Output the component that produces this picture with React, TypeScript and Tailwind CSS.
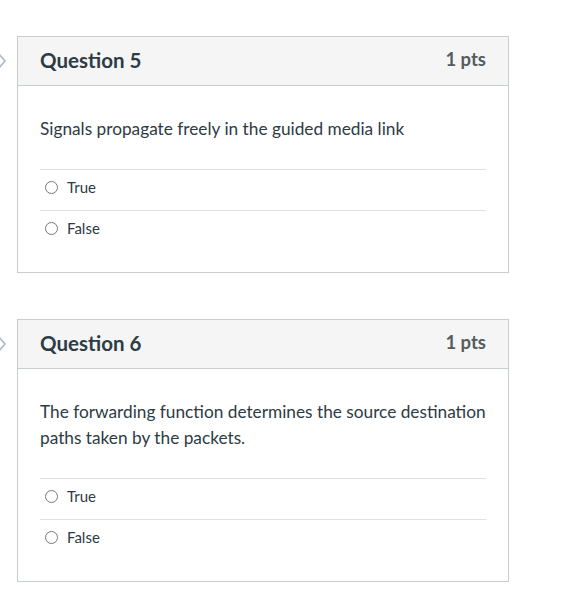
import React from 'react';

type Question = {
  id: number;
  text: string;
  points: string;
  answers: string[];
};

const questions: Question[] = [
  {
    id: 5,
    text: 'Signals propagate freely in the guided media link',
    points: '1 pts',
    answers: ['True', 'False'],
  },
  {
    id: 6,
    text: 'The forwarding function determines the source destination paths taken by the packets.',
    points: '1 pts',
    answers: ['True', 'False'],
  },
];

function Chevron() {
  return (
    <svg width="10" height="18" viewBox="0 0 10 18" className="shrink-0 -ml-[3px] mt-[16px]">
      <path d="M1 1 L8 9 L1 17" fill="none" stroke="#a9b9c9" strokeWidth="1.6" />
    </svg>
  );
}

function QuestionCard({ q }: { q: Question }) {
  return (
    <div className="flex items-start">
      <Chevron />
      <div className="ml-[10px] w-[492px] border border-[#c7cdd1] bg-white">
        {/* header */}
        <div className="flex items-center justify-between h-[49px] px-[22px] pb-[2px] bg-[#f5f5f5] border-b border-[#c7cdd1]">
          <span className="text-[20.5px] font-bold text-[#2d3b45]">Question {q.id}</span>
          <span className="text-[18.5px] font-bold text-[#555b60]">{q.points}</span>
        </div>

        {/* body */}
        <div className="pt-[30px] pb-[21px] px-[22px]">
          <p className="text-[17.25px] leading-[26px] text-[#2d3b45]">{q.text}</p>
          <div className="mt-[27px]">
            {q.answers.map((a) => (
              <div key={a} className="flex items-center h-[41px] border-t border-[#dde1e4] pl-[5px] pb-[5px]">
                <span className="w-[13px] h-[13px] rounded-full border border-[#777] bg-white" />
                <span className="ml-[9px] text-[15px] text-[#2d3b45]">{a}</span>
              </div>
            ))}
          </div>
        </div>
      </div>
    </div>
  );
}

export default function App() {
  return (
    <div
      className="min-h-screen bg-white pt-[36px] overflow-hidden"
      style={{ fontFamily: 'Lato, "Noto Sans", sans-serif' }}
    >
      <div className="flex flex-col gap-[46px]">
        {questions.map((q) => (
          <QuestionCard key={q.id} q={q} />
        ))}
      </div>
    </div>
  );
}
